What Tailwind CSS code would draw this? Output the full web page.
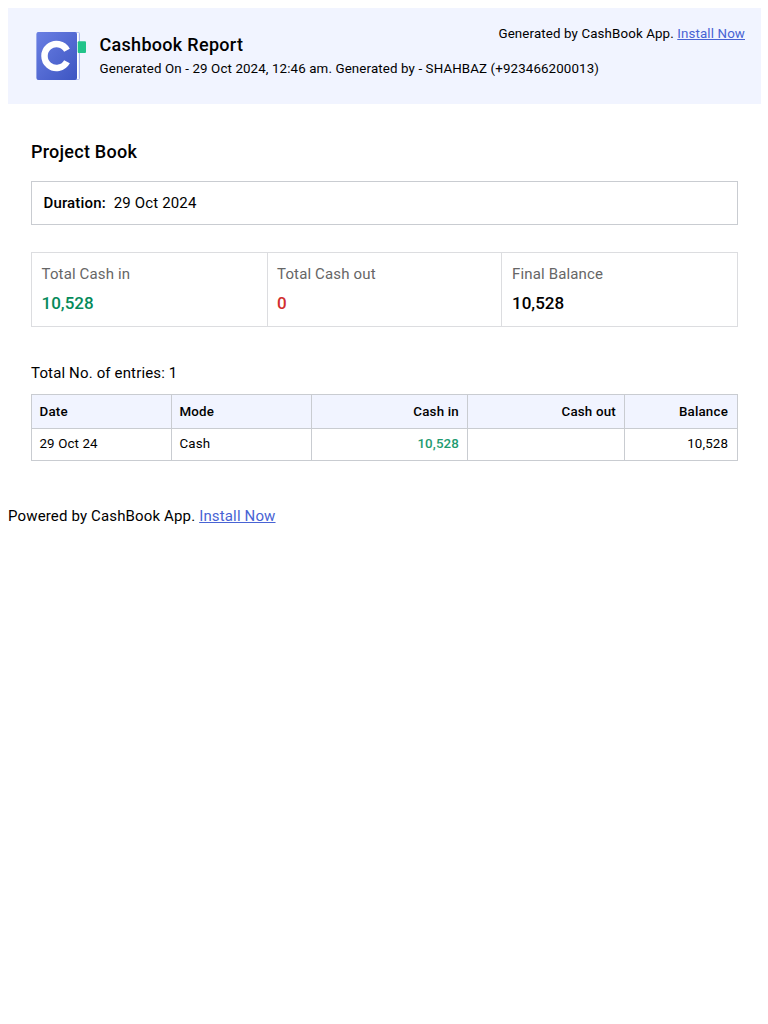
<!DOCTYPE html>
<html lang="en">
<head>
  <meta charset="UTF-8">
  <meta name="viewport" content="width=device-width, initial-scale=1.0">
  <title>Cashbook Report</title>
  <script src="https://cdn.jsdelivr.net/npm/@tailwindcss/browser@4"></script>
</head>
<body class="bg-white text-black p-2 font-['Roboto',sans-serif]">
  <header class="relative h-24 -mr-px bg-[#f1f4ff] flex items-center pl-7">
    <svg width="50" height="48" viewBox="0 0 50 48" class="shrink-0">
      <defs>
        <linearGradient id="logoBg" x1="0" y1="0" x2="1" y2="1">
          <stop offset="0" stop-color="#6a7fe3"/>
          <stop offset="1" stop-color="#3d55c2"/>
        </linearGradient>
      </defs>
      <rect x="0.5" y="0" width="43.5" height="48" rx="2" fill="#aebbf0"/>
      <rect x="40" y="0.8" width="2.8" height="46.4" fill="#fff"/>
      <rect x="0.5" y="0" width="40.5" height="48" rx="2" fill="url(#logoBg)"/>
      <rect x="41.7" y="9.3" width="8.3" height="11.7" rx="1" fill="#22c38a"/>
      <path d="M31 18.2 A12 12 0 1 0 31 29.8" fill="none" stroke="#fff" stroke-width="6.5"/>
    </svg>
    <div class="ml-[13.5px] -mt-[1.5px]">
      <h1 class="text-lg leading-6 font-medium tracking-[0.3px]">Cashbook Report</h1>
      <p class="text-[13.33px] leading-[18px] mt-[3.5px] tracking-[0.12px]">Generated On - 29 Oct 2024, 12:46 am. Generated by - SHAHBAZ (+923466200013)</p>
    </div>
    <p class="absolute top-[17px] right-4 text-[13.33px] leading-[18px] tracking-[0.12px]">Generated by CashBook App. <a href="#" class="text-[#4863d4] underline">Install Now</a></p>
  </header>

  <main class="pl-[23px] pr-[22px]">
    <h2 class="mt-[37px] text-lg leading-[22px] font-medium tracking-[0.25px]">Project Book</h2>

    <div class="mt-[18px] h-11 border border-[#c9ccd1] flex items-center pl-[11.5px] text-[15px] tracking-[0.15px]">
      <span class="font-medium">Duration:</span>
      <span class="ml-2">29 Oct 2024</span>
    </div>

    <div class="mt-[27px] h-[75px] border border-[#dcdde0] grid grid-cols-[236px_234px_1fr]">
      <div class="border-r border-[#dcdde0] pl-[9.5px] pt-3">
        <p class="text-[15px] leading-[18px] tracking-[0.15px] text-[#666]">Total Cash in</p>
        <p class="mt-[9px] text-[17px] leading-[22px] font-medium text-[#058a5a]">10,528</p>
      </div>
      <div class="border-r border-[#dcdde0] pl-[9px] pt-3">
        <p class="text-[15px] leading-[18px] tracking-[0.15px] text-[#666]">Total Cash out</p>
        <p class="mt-[9px] text-[17px] leading-[22px] font-medium text-[#d12f2f]">0</p>
      </div>
      <div class="pl-[10px] pt-3">
        <p class="text-[15px] leading-[18px] tracking-[0.15px] text-[#666]">Final Balance</p>
        <p class="mt-[9px] text-[17px] leading-[22px] font-medium">10,528</p>
      </div>
    </div>

    <p class="mt-[37px] text-[15px] leading-[18px] tracking-[0.15px]">Total No. of entries: 1</p>

    <table class="mt-3 w-full table-fixed border-collapse text-[13.33px]">
      <colgroup>
        <col class="w-[140px]">
        <col class="w-[140px]">
        <col class="w-[156px]">
        <col class="w-[157px]">
        <col>
      </colgroup>
      <thead>
        <tr class="h-[34px] bg-[#f1f4ff]">
          <th class="border border-[#c9ccd1] pl-[7.5px] pr-2 text-left font-medium tracking-[0.2px]">Date</th>
          <th class="border border-[#c9ccd1] pl-[7.5px] pr-2 text-left font-medium tracking-[0.2px]">Mode</th>
          <th class="border border-[#c9ccd1] px-2 text-right font-medium tracking-[0.2px]">Cash in</th>
          <th class="border border-[#c9ccd1] px-2 text-right font-medium tracking-[0.2px]">Cash out</th>
          <th class="border border-[#c9ccd1] pl-2 pr-[9px] text-right font-medium tracking-[0.2px]">Balance</th>
        </tr>
      </thead>
      <tbody>
        <tr class="h-[32px]">
          <td class="border border-[#c9ccd1] pl-[7.5px] pr-2 pb-0.5 tracking-[0.12px]">29 Oct 24</td>
          <td class="border border-[#c9ccd1] pl-[7.5px] pr-2 pb-0.5 tracking-[0.12px]">Cash</td>
          <td class="border border-[#c9ccd1] px-2 pb-0.5 text-right font-medium tracking-[0.12px] text-[#1e9b70]">10,528</td>
          <td class="border border-[#c9ccd1] px-2"></td>
          <td class="border border-[#c9ccd1] pl-2 pr-[9px] pb-0.5 text-right tracking-[0.12px]">10,528</td>
        </tr>
      </tbody>
    </table>
  </main>

  <p class="mt-[46px] text-[15px] leading-[18px] tracking-[0.15px]">Powered by CashBook App. <a href="#" class="text-[#4863d4] underline">Install Now</a></p>
</body>
</html>
